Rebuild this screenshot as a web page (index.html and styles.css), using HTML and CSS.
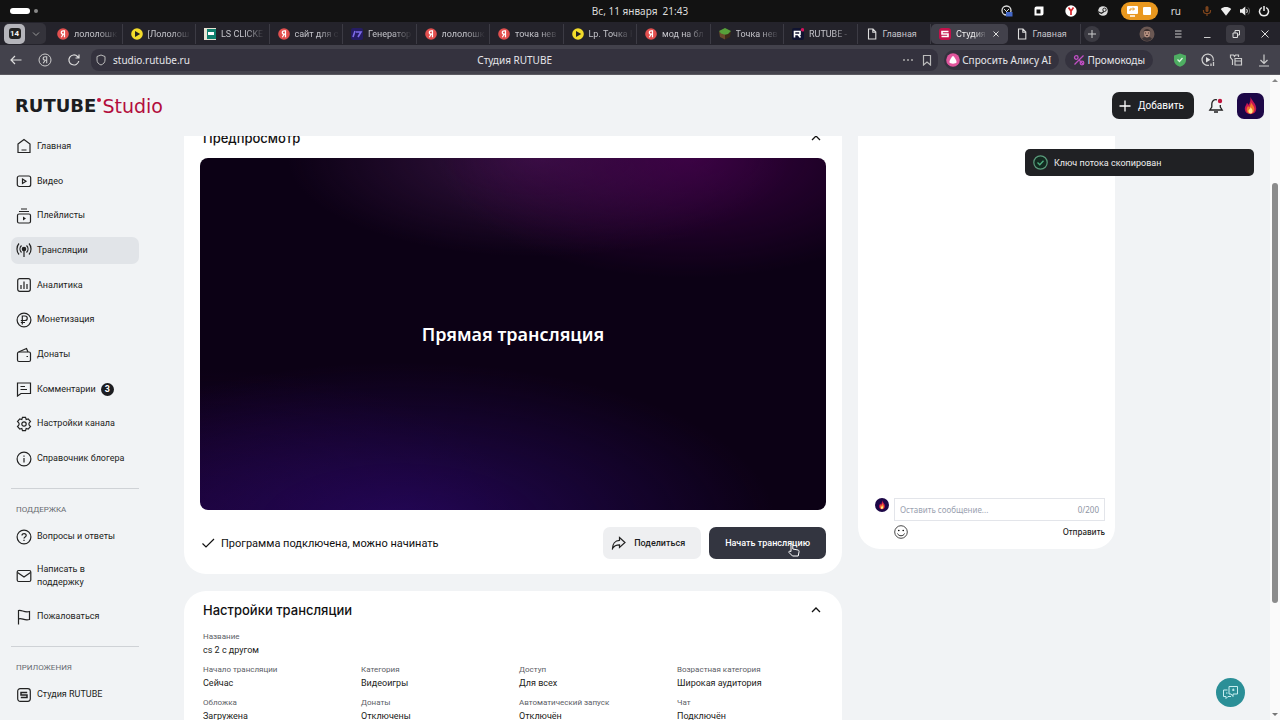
FILE: index.html
```html
<!DOCTYPE html>
<html lang="ru">
<head>
<meta charset="utf-8">
<title>Студия RUTUBE</title>
<link rel="stylesheet" href="styles.css">
</head>
<body>
<svg class="defs" aria-hidden="true">
  <defs>
    <symbol id="ya" viewBox="0 0 12 12"><circle cx="6" cy="6" r="5.8" fill="#e2504f"/><path d="M7.5 9.2V2.8H6.3C5 2.8 4.3 3.500 4.300 4.500C4.300 5.400 5 6.200 6.300 6.200H7.500M6.200 6.200L4.300 9.200" fill="none" stroke="#fff" stroke-width="1.2"/></symbol>
    <symbol id="play-y" viewBox="0 0 12 12"><circle cx="6" cy="6" r="5.800" fill="#f3dc2b"/><path d="M4 3L9.200 6L4 9Z" fill="#222"/></symbol>
    <symbol id="file" viewBox="0 0 12 12"><path d="M2.500 1H7L9.800 4V11H2.500ZM6.800 1V4.200H9.800" fill="none" stroke="#ddd" stroke-width="1.100"/></symbol>
    <symbol id="flame" viewBox="0 0 26 26"><rect width="26" height="26" fill="#1c0747"/><path d="M13 4C14 8 18.500 10 18.500 15.500C18.500 19 16 21 13 21C10 21 7.500 19 7.500 15.500C7.500 13 9 12 9.500 10C10.500 10.500 11 11 11.200 12C12.500 10 13.300 7 13 4Z" fill="#c81652"/><path d="M13.300 9C14 11.500 16.800 13 16.800 16C16.800 18.800 15 20.500 13 20.500C11 20.500 9.300 18.800 9.300 16.500C9.300 15 10.300 14 10.500 13C11.300 13.300 11.600 14 11.700 14.500C12.800 13 13.500 11 13.300 9Z" fill="#f4762c"/><path d="M13.200 14C13.600 15.300 15 16.200 15 17.800C15 19.300 14 20.300 13 20.300S11 19.300 11 17.900C11 16.500 13 15.800 13.200 14Z" fill="#ffe98c"/></symbol>
    <symbol id="chevron" viewBox="0 0 12 12"><path d="M2 8L6 4L10 8" fill="none" stroke="#111" stroke-width="1.300"/></symbol>
  </defs>
</svg>

<div class="sysbar">
  <div class="workspaces"><span class="ws-current"></span><span class="ws-dot"></span></div>
  <time class="clock">Вс, 11 января&nbsp; 21:43</time>
  <div class="tray">
    <svg class="tray-icon" viewBox="0 0 12 12"><circle cx="5.500" cy="5.500" r="4.500" fill="none" stroke="#ddd" stroke-width="1.300"/><path d="M3 4L5.500 6.500L8 4M5.500 6V9" stroke="#ddd" fill="none"/><rect x="5" y="7" width="6.500" height="4.500" fill="#4468c8"/></svg>
    <svg class="tray-icon" viewBox="0 0 12 12"><path d="M3.500 1.500H10.500V8.500A2 2 0 0 1 8.500 10.500H1.500V3.500A2 2 0 0 1 3.500 1.500Z" fill="#fff"/><rect x="3.500" y="4.500" width="4" height="4" fill="#121212"/></svg>
    <svg class="tray-icon" viewBox="0 0 12 12"><circle cx="6" cy="6" r="5.700" fill="#fff"/><path d="M3.500 2.500L6 6L8.500 2.500M6 5.500V10" fill="none" stroke="#d8262c" stroke-width="1.700"/></svg>
    <svg class="tray-icon" viewBox="0 0 12 12"><circle cx="6" cy="6" r="4.800" fill="#ddd"/><circle cx="7.500" cy="4.800" r="1.700" fill="#ddd" stroke="#222"/><path d="M0 6.300L4.500 8.300L7 6.500" fill="none" stroke="#222" stroke-width="1.300"/></svg>
    <span class="cast">
      <svg width="37" height="18" viewBox="0 0 37 18"><rect x="6" y="4" width="11" height="8" rx="1" fill="#fff"/><path d="M9 14H14" stroke="#fff" stroke-width="1.500"/><path d="M9 9V7H13M12 5.500L13.500 7L12 8.500" fill="none" stroke="#e9981f"/><rect x="22" y="5" width="8" height="8" rx="1" fill="#fff"/></svg>
    </span>
    <span class="layout">ru</span>
    <svg class="tray-icon mic" viewBox="0 0 12 12"><rect x="4.500" y="1" width="3" height="6" rx="1.500" fill="#7b431c"/><path d="M2.500 5V6C2.500 9.500 9.500 9.500 9.500 6V5M6 9V11" fill="none" stroke="#7b431c" stroke-width="1.200"/></svg>
    <svg class="tray-icon" viewBox="0 0 12 12"><path d="M.8 4C4 1.400 8 1.400 11.200 4L6 10.800Z" fill="#eee"/></svg>
    <svg class="tray-icon" viewBox="0 0 12 12"><path d="M1 4.300H3L6.300 1.500V10.500L3 7.700H1Z" fill="#eee"/><path d="M7.500 4C8.500 5 8.500 7 7.500 8" fill="none" stroke="#eee"/><path d="M9 2.500C11 4.500 11 7.500 9 9.500" fill="none" stroke="#777"/></svg>
    <svg class="tray-icon" viewBox="0 0 12 12"><path d="M3.800 2.500C-.5 5.500 1.800 10.800 6 10.800S12.500 5.500 8.200 2.500M6 1V6" fill="none" stroke="#eee" stroke-width="1.500"/></svg>
  </div>
</div>

<div class="tabbar">
  <div class="tab-group">
    <button class="tab-count" aria-label="14 вкладок"><span>14</span></button>
    <svg width="8" height="8" viewBox="0 0 8 8"><path d="M1 2.500L4 5.500L7 2.500" fill="none" stroke="#999" /></svg>
  </div>
  <div class="tabs">
    <button class="tab"><svg><use href="#ya"/></svg><span>лололошк</span></button>
    <button class="tab"><svg><use href="#play-y"/></svg><span>[Лололош</span></button>
    <button class="tab"><svg viewBox="0 0 12 12"><rect width="12" height="12" fill="#e8e4d4"/><rect x="3" y="1" width="9" height="10" fill="#0f7f6d"/><rect x="4" y="4" width="6" height="3" fill="#fff"/></svg><span>LS CLICKE</span></button>
    <button class="tab"><svg><use href="#ya"/></svg><span>сайт для с</span></button>
    <button class="tab"><svg viewBox="0 0 12 12"><rect width="12" height="12" rx="2" fill="#251c63"/><path d="M2 9L4 3M5 4H10L7 9" fill="none" stroke="#7d6be8" stroke-width="1.600"/></svg><span>Генератор</span></button>
    <button class="tab"><svg><use href="#ya"/></svg><span>лололошк</span></button>
    <button class="tab"><svg><use href="#ya"/></svg><span>точка нев</span></button>
    <button class="tab"><svg><use href="#play-y"/></svg><span>Lp. Точка Н</span></button>
    <button class="tab"><svg><use href="#ya"/></svg><span>мод на бл</span></button>
    <button class="tab"><svg viewBox="0 0 12 12"><path d="M0 3.500L6 6.500V11.500L1 9Z" fill="#6b4a2c"/><path d="M12 3.500L6 6.500V11.500L11 9Z" fill="#3e2a1a"/><path d="M0 3L6 0L12 3L9 6L6 6.800L2 5.500Z" fill="#57a03a"/></svg><span>Точка нев</span></button>
    <button class="tab"><svg viewBox="0 0 12 12"><rect width="12" height="12" rx="2" fill="#101330"/><circle cx="10.500" cy="1.800" r="1.800" fill="#d4145a"/><path d="M2.500 9.500V3.500H8V6.500H3M6 6.500L8.500 9.500" fill="none" stroke="#fff" stroke-width="1.600"/></svg><span>RUTUBE -</span></button>
    <button class="tab"><svg><use href="#file"/></svg><span class="full">Главная</span></button>
    <button class="tab active"><svg viewBox="0 0 12 12"><rect width="12" height="12" rx="3" fill="#c4114b"/><path d="M9.500 3.500H3V6H9V8.500H2.500" fill="none" stroke="#fff" stroke-width="1.600"/></svg><span>Студия</span><svg class="tab-close" viewBox="0 0 8 8"><path d="M1.500 1.500L6.500 6.500M6.500 1.500L1.500 6.500" stroke="#ddd"/></svg></button>
    <button class="tab"><svg><use href="#file"/></svg><span class="full">Главная</span></button>
  </div>
  <button class="new-tab" aria-label="Новая вкладка"><svg width="10" height="10" viewBox="0 0 10 10"><path d="M5 1V9M1 5H9" stroke="#ccc"/></svg></button>
  <div class="window-controls">
    <svg class="person" viewBox="0 0 16 16"><circle cx="8" cy="8" r="7.500" fill="#6b5853"/><path d="M3 13C4 10 12 10 13 13A7.500 7.500 0 0 1 3 13Z" fill="#3c3436"/><ellipse cx="8" cy="7.500" rx="3" ry="4" fill="#b08c7c"/><path d="M4.500 6C5 2 11 2 11.500 6L10.500 5H5.500Z" fill="#3b2e2c"/><path d="M6 7H7M9 7H10M7 9.500H9" stroke="#4a3430"/></svg>
    <button aria-label="Меню"><svg viewBox="0 0 12 12"><path d="M3 3H9.500M3 6H9.500M3 9H9.500" stroke="#ccc"/></svg></button>
    <button aria-label="Свернуть"><svg viewBox="0 0 12 12"><path d="M3 9.500H9.500" stroke="#ccc"/></svg></button>
    <button class="restore" aria-label="Восстановить"><svg viewBox="0 0 12 12"><path d="M3 5H7.500V9.500H3ZM5 5V2.500H9.500V7H7.500" fill="none" stroke="#ddd"/></svg></button>
    <button aria-label="Закрыть"><svg viewBox="0 0 12 12"><path d="M2.500 2.500L9.500 9.500M9.500 2.500L2.500 9.500" stroke="#ddd"/></svg></button>
  </div>
</div>

<div class="toolbar">
  <button class="tool" aria-label="Назад"><svg viewBox="0 0 14 14"><path d="M2 7H12.500M6 3L2 7L6 11" fill="none" stroke="#ddd" stroke-width="1.200"/></svg></button>
  <button class="tool" aria-label="Яндекс"><svg viewBox="0 0 14 14"><circle cx="7" cy="7" r="6" fill="none" stroke="#ccc"/><path d="M8.700 10.300V3.700H7.300C5.900 3.700 5.200 4.500 5.200 5.500C5.200 6.500 6 7.200 7.300 7.200H8.700M7.200 7.200L5.200 10.300" fill="none" stroke="#ccc" stroke-width="1.100"/></svg></button>
  <button class="tool" aria-label="Обновить"><svg viewBox="0 0 14 14"><path d="M11.800 8A5 5 0 1 1 10.500 3.500L11.800 4.800M12 1.500V5H8.500" fill="none" stroke="#ddd" stroke-width="1.200"/></svg></button>
  <div class="omnibox">
    <label class="address"><svg width="10" height="12" viewBox="0 0 10 12"><path d="M5 1L9 2.500V6C9 8.500 7.500 10 5 11C2.500 10 1 8.500 1 6V2.500Z" fill="none" stroke="#bbb"/></svg><input type="text" value="studio.rutube.ru" aria-label="Адрес"></label>
    <span class="page-title">Студия RUTUBE</span>
    <div class="omni-actions">
      <svg width="12" height="12" viewBox="0 0 12 12"><g fill="#aaa"><circle cx="2" cy="6" r="1"/><circle cx="6" cy="6" r="1"/><circle cx="10" cy="6" r="1"/></g></svg>
      <svg width="12" height="12" viewBox="0 0 12 12"><path d="M2.500 1.500H9.500V11L6 8L2.500 11Z" fill="none" stroke="#bbb" stroke-width="1.200"/></svg>
    </div>
  </div>
  <button class="chip"><svg width="14" height="14" viewBox="0 0 14 14"><circle cx="7" cy="7" r="6.800" fill="#e0559c"/><path d="M7 3C8 3 11 8 10.500 9.500C10 11 4 11 3.500 9.500C3 8 6 3 7 3Z" fill="#fff"/></svg>Спросить Алису AI</button>
  <button class="chip promo"><svg width="12" height="12" viewBox="0 0 12 12"><path d="M10.500 1.500L1.500 10.500M5.500 5.500L10.500 10.500" stroke="#c04fc4" stroke-width="1.300"/><circle cx="3.300" cy="3.500" r="1.800" fill="none" stroke="#c04fc4" stroke-width="1.300"/><circle cx="9" cy="9" r="1.800" fill="none" stroke="#c04fc4" stroke-width="1.300"/></svg>Промокоды</button>
  <div class="extensions">
    <svg viewBox="0 0 14 14"><path d="M7 .5L13 2.500V7C13 10.500 10.500 12.500 7 13.800C3.500 12.500 1 10.500 1 7V2.500Z" fill="#4eae62"/><path d="M4.500 6.500L6.500 8.500L9.500 5" fill="none" stroke="#dff5e3" stroke-width="1.300"/></svg>
    <svg viewBox="0 0 14 14"><path d="M8 12.300A5.700 5.700 0 1 1 12.300 8" fill="none" stroke="#ccc" stroke-width="1.200"/><path d="M5 4L9.500 6.700L5 9.400Z" fill="#ddd"/><path d="M10 13V10.500M12.500 13V9" stroke="#ccc" stroke-width="1.300"/></svg>
    <svg viewBox="0 0 14 14"><path d="M6 5.500H12.500V12H6ZM6 8H12.500M4 11.500H3.500V7L1.500 4.500V2H4.500L5.500 3.500L6.500 2H9.500V4" fill="none" stroke="#ccc" stroke-width="1.200"/></svg>
    <svg viewBox="0 0 14 14"><path d="M7 1.500V10M3.500 7L7 10.500L10.500 7M2 13H12" fill="none" stroke="#ccc" stroke-width="1.200"/></svg>
  </div>
</div>

<div class="viewport">
  <div class="page">
    <header class="page-header">
      <a class="logo" href="#"><span class="logo-main">RUTUBE</span><i class="logo-dot"></i><span class="logo-sub">Studio</span></a>
      <div class="header-actions">
        <button class="add"><svg width="12" height="12" viewBox="0 0 12 12"><path d="M6 .5V11.500M.5 6H11.500" stroke="#fff" stroke-width="1.300"/></svg>Добавить</button>
        <button class="bell" aria-label="Уведомления"><svg width="16" height="16" viewBox="0 0 16 16"><path d="M9 1.800C5.500 1 3.800 3.500 3.800 6V9L1.800 12H14.200L12.300 9V7M6 14H10" fill="none" stroke="#222" stroke-width="1.300"/><circle cx="12" cy="3" r="2.200" fill="#c0143c"/></svg></button>
        <button class="profile" aria-label="Профиль"><svg width="27" height="26" viewBox="0 0 26 26" preserveAspectRatio="xMidYMid slice"><use href="#flame"/></svg></button>
      </div>
    </header>
    <div class="layout-row">
      <nav class="sidebar">
        <div class="nav-main">
          <a href="#" class="nav-item"><svg viewBox="0 0 16 16"><path d="M2 6L8 1.500L14 6V14.500H2ZM5.500 12H10.500"/></svg>Главная</a>
          <a href="#" class="nav-item"><svg viewBox="0 0 16 16"><rect x="1.300" y="3" width="13.400" height="10.500" rx="2"/><path d="M6.500 6L10 8.200L6.500 10.500Z"/></svg>Видео</a>
          <a href="#" class="nav-item"><svg viewBox="0 0 16 16"><rect x="1.500" y="6" width="13" height="9" rx="1.500"/><path d="M3 3.500H13M5 1H11"/><path d="M7 8.500L10 10.500L7 12.500Z" fill="#222" stroke="none"/></svg>Плейлисты</a>
          <a href="#" class="nav-item current"><svg viewBox="0 0 16 16"><circle cx="8" cy="7" r="1.700" fill="#222"/><path d="M8 8V15M5.500 10.500C3.500 8.500 3.500 5.500 5.500 3.500M10.500 10.500C12.500 8.500 12.500 5.500 10.500 3.500M3 12.500C.3 9.500.3 4.500 3 1.500M13 12.500C15.700 9.500 15.700 4.500 13 1.500"/></svg>Трансляции</a>
          <a href="#" class="nav-item"><svg viewBox="0 0 16 16"><rect x="1.700" y="1.700" width="12.600" height="12.600" rx="2"/><path d="M5 8V12M8 4.500V12M11 7V12"/></svg>Аналитика</a>
          <a href="#" class="nav-item"><svg viewBox="0 0 16 16"><circle cx="8" cy="8" r="6.900"/><path d="M6.300 12.500V4H9C12 4 12 8.500 9 8.500H4.800M4.800 10.500H9"/></svg>Монетизация</a>
          <a href="#" class="nav-item"><svg viewBox="0 0 16 16"><rect x="1.500" y="5" width="13" height="9.500" rx="1.500"/><path d="M2.500 5L10.500 1.500L12 5M10.500 9.500H12"/></svg>Донаты</a>
          <a href="#" class="nav-item"><svg viewBox="0 0 16 16"><path d="M1.500 2H14.500V12.500H5L1.500 15ZM4.500 5.500H9M4.500 8.500H11"/></svg>Комментарии<b class="count">3</b></a>
          <a href="#" class="nav-item"><svg viewBox="0 0 16 16"><path d="M6.500 1.300H9.500L10.200 3.500L12.200 2.900L14.500 5.500L13 7.200V8.800L14.500 10.500L12.200 13.100L10.200 12.500L9.500 14.700H6.500L5.800 12.500L3.800 13.100L1.500 10.500L3 8.800V7.200L1.500 5.500L3.800 2.900L5.800 3.500Z"/><circle cx="8" cy="8" r="2.200"/></svg>Настройки канала</a>
          <a href="#" class="nav-item"><svg viewBox="0 0 16 16"><circle cx="8" cy="8" r="6.900"/><path d="M8 7V11.500M8 4.500V5.800"/></svg>Справочник блогера</a>
        </div>
        <div class="nav-section">
          <h2>ПОДДЕРЖКА</h2>
          <a href="#" class="nav-item"><svg viewBox="0 0 16 16"><circle cx="8" cy="8" r="6.900"/><path d="M6 6.500C6 3.800 10.200 4 10.200 6.500C10.200 8 8 8 8 9.500M8 10.800V12"/></svg>Вопросы и ответы</a>
          <a href="#" class="nav-item tall"><svg viewBox="0 0 16 16"><rect x="1.200" y="2.500" width="13.600" height="11" rx="1.500"/><path d="M1.500 4.500L8 9L14.500 4.500"/></svg>Написать в поддержку</a>
          <a href="#" class="nav-item"><svg viewBox="0 0 16 16"><path d="M2.500 15.500V1.500C6 .5 8 4 13.500 2.500V10.500C8 12 6 8.500 2.500 10"/></svg>Пожаловаться</a>
        </div>
        <div class="nav-section">
          <h2>ПРИЛОЖЕНИЯ</h2>
          <a href="#" class="nav-item"><svg viewBox="0 0 16 16"><rect x="1.700" y="1.700" width="12.600" height="12.600" rx="2.500"/><path d="M11.200 5.500H5V8H11V10.500H4.800" stroke-width="1.500"/></svg>Студия RUTUBE</a>
        </div>
      </nav>
      <main class="content">
        <div class="column">
          <section class="card preview">
            <div class="card-head"><h1>Предпросмотр</h1><button aria-label="Свернуть"><svg width="12" height="12"><use href="#chevron"/></svg></button></div>
            <div class="video">Прямая трансляция</div>
            <div class="actions">
              <svg width="14" height="14" viewBox="0 0 14 14"><path d="M1.500 7.500L5 11L13 3" fill="none" stroke="#111" stroke-width="1.200"/></svg>
              <p>Программа подключена, можно начинать</p>
              <button class="share"><svg width="15" height="14" viewBox="0 0 15 14"><path d="M8.500 1.500L14 6.500L8.500 11.500V8.800C5 8.800 3 9.800 1.500 12.500C1.500 8 4 4.500 8.500 4.300Z" fill="none" stroke="#222" stroke-width="1.200"/></svg>Поделиться</button>
              <button class="start">Начать трансляцию
                <svg class="pointer" width="12" height="14" viewBox="0 0 12 14"><path d="M3 8.500V2C3 .7 4.800.7 4.800 2V6L10 7C11 7.300 11.200 8 11 9L10.200 13H4.500L1 9.500C.5 8.500 1.500 7.500 3 8.500Z" fill="#333540" stroke="#fff"/></svg>
              </button>
            </div>
          </section>
          <section class="card settings">
            <div class="card-head"><h1>Настройки трансляции</h1><button aria-label="Свернуть"><svg width="12" height="12"><use href="#chevron"/></svg></button></div>
            <dl class="fields">
              <div class="wide"><dt>Название</dt><dd>cs 2 с другом</dd></div>
              <div><dt>Начало трансляции</dt><dd>Сейчас</dd></div>
              <div><dt>Категория</dt><dd>Видеоигры</dd></div>
              <div><dt>Доступ</dt><dd>Для всех</dd></div>
              <div><dt>Возрастная категория</dt><dd>Широкая аудитория</dd></div>
              <div><dt>Обложка</dt><dd>Загружена</dd></div>
              <div><dt>Донаты</dt><dd>Отключены</dd></div>
              <div><dt>Автоматический запуск</dt><dd>Отключён</dd></div>
              <div><dt>Чат</dt><dd>Подключён</dd></div>
            </dl>
          </section>
        </div>
        <aside class="card chat">
          <svg class="chat-avatar" viewBox="0 0 26 26"><use href="#flame"/></svg>
          <form class="composer">
            <label class="message"><input type="text" placeholder="Оставить сообщение..." aria-label="Сообщение"><span>0/200</span></label>
            <div class="composer-row">
              <button type="button" aria-label="Эмодзи"><svg width="14" height="14" viewBox="0 0 14 14"><circle cx="7" cy="7" r="6.300" fill="none" stroke="#333" stroke-width=".9"/><path d="M3.500 8.500C4.500 11.500 9.500 11.500 10.500 8.500" fill="none" stroke="#333"/><circle cx="4.800" cy="5.500" r=".8"/><circle cx="9.200" cy="5.500" r=".8"/></svg></button>
              <button type="submit" class="send">Отправить</button>
            </div>
          </form>
        </aside>
      </main>
    </div>
    <div class="toast" role="status"><svg width="15" height="15" viewBox="0 0 15 15"><circle cx="7.500" cy="7.500" r="6.700" fill="#122a20" stroke="#5a9c7c" stroke-width="1.200"/><path d="M4.500 7.500L6.800 9.800L10.500 5.800" fill="none" stroke="#4fae80" stroke-width="1.300"/></svg>Ключ потока скопирован</div>
    <button class="help" aria-label="Помощь"><svg width="17" height="15" viewBox="0 0 17 15"><path d="M7 1.500H15.500V9H11V11.500L9 9H7ZM5.500 5H1.500V11.500H4V13.500L6 11.500H9M11.300 3.500V6M10 5H12.500M4 8H5.500" fill="none" stroke="#c9eef0"/></svg></button>
  </div>
  <div class="scrollbar"><i class="arrow up"></i><i class="thumb"></i><i class="arrow down"></i></div>
</div>
</body>
</html>
```
FILE: styles.css
```css
* { box-sizing: border-box; }
body {
  margin: 0;
  height: 100vh;
  display: flex;
  flex-direction: column;
  overflow: hidden;
  font-family: Roboto, "Noto Sans", sans-serif;
  font-size: 9px;
  color: #1c1d21;
}
button {
  margin: 0;
  padding: 0;
  border: 0;
  background: none;
  font: inherit;
  color: inherit;
}
input {
  min-width: 0;
  padding: 0;
  border: 0;
  outline: 0;
  background: none;
  font: inherit;
  color: inherit;
}
a { color: inherit; text-decoration: none; }
svg { display: block; flex: none; }
.defs { position: absolute; width: 0; height: 0; }

/* System bar */
.sysbar {
  flex: none;
  height: 22px;
  padding: 0 10px;
  display: grid;
  grid-template-columns: 1fr auto 1fr;
  align-items: center;
  background: #121212;
  color: #ddd;
  font-family: "Noto Sans", sans-serif;
  font-size: 10px;
}
.workspaces { display: flex; align-items: center; gap: 4px; }
.ws-current { width: 20px; height: 6px; border-radius: 3px; background: #fff; }
.ws-dot { width: 4px; height: 4px; border-radius: 2px; background: #888; }
.tray { display: flex; align-items: center; justify-content: flex-end; gap: 7px; }
.tray-icon { width: 12px; height: 12px; }
.tray-icon:nth-child(-n+3) { margin-right: 13px; }
.cast { margin-left: 5px; border-radius: 9px; background: #e9981f; }
.layout { margin: 0 13px 0 6px; }

/* Tabs */
.tabbar {
  flex: none;
  height: 23px;
  display: flex;
  align-items: center;
  background: #24232b;
  color: #c4c4ca;
}
.tab-group {
  width: 42px;
  height: 21px;
  margin-left: 4px;
  border-radius: 5px;
  display: flex;
  align-items: center;
  gap: 7px;
  background: #34333b;
}
.tab-count {
  width: 21px;
  height: 20px;
  border-radius: 5px;
  background: #b4b4ba;
  display: grid;
  place-items: center;
}
.tab-count span {
  width: 12px;
  border-radius: 3px;
  background: #222;
  color: #fff;
  font-size: 8px;
  line-height: 11px;
  font-weight: 600;
}
.tabs { flex: 1; min-width: 0; display: flex; margin-left: 3px; }
.tab {
  flex: 1 1 0;
  min-width: 0;
  height: 20px;
  padding: 0 4px 0 8px;
  display: flex;
  align-items: center;
  gap: 5px;
  border-right: 1px solid #3c3b44;
  white-space: nowrap;
}
.tab svg { width: 12px; height: 12px; }
.tab span {
  flex: 1;
  min-width: 0;
  text-align: left;
  -webkit-mask-image: linear-gradient(90deg, #000 55%, rgba(0, 0, 0, .1) 95%);
  mask-image: linear-gradient(90deg, #000 55%, rgba(0, 0, 0, .1) 95%);
}
.tab .full { -webkit-mask-image: none; mask-image: none; }
.tab.active { background: #42414b; border-color: transparent; border-radius: 5px; color: #eee; padding-right: 7px; }
.tab .tab-close { width: 8px; height: 8px; }
.new-tab {
  width: 16px;
  height: 16px;
  margin-left: 3px;
  border-radius: 8px;
  background: #3b3a42;
  display: grid;
  place-items: center;
}
.window-controls { display: flex; align-items: center; gap: 10px; margin: 0 6px 0 39px; }
.window-controls button { width: 19px; height: 18px; display: grid; place-items: center; border-radius: 4px; }
.window-controls svg { width: 12px; height: 12px; }
.window-controls .person { width: 16px; height: 16px; margin-right: 3px; }
.window-controls .restore { background: #3b3a42; }

/* Address bar */
.toolbar {
  flex: none;
  height: 30px;
  padding: 0 9px;
  display: flex;
  align-items: center;
  background: #43424c;
  border-bottom: 1px solid #5a5960;
  color: #e6e6ea;
  font-family: "Noto Sans", sans-serif;
  font-size: 10px;
}
.tool { width: 14px; height: 14px; margin-right: 15px; }
.omnibox {
  flex: 1;
  min-width: 0;
  height: 22px;
  margin-left: -5px;
  padding: 0 5px;
  display: grid;
  grid-template-columns: 1fr auto 1fr;
  align-items: center;
  border-radius: 8px;
  background: #34323e;
}
.address { display: flex; align-items: center; gap: 7px; }
.omni-actions { display: flex; justify-content: flex-end; gap: 7px; }
.chip {
  height: 20px;
  margin-left: 6px;
  padding: 0 8px 0 2px;
  display: flex;
  align-items: center;
  gap: 2px;
  border-radius: 10px;
  background: #34323e;
}
.promo { padding: 0 8px; gap: 2px; }
.extensions { display: flex; gap: 14px; margin-left: 20px; }
.extensions svg { width: 14px; height: 14px; }

/* Page */
.viewport { flex: 1; min-height: 0; display: flex; }
.page {
  flex: 1;
  min-width: 0;
  position: relative;
  display: flex;
  flex-direction: column;
  background: #f1f3f5;
}
.page-header {
  flex: none;
  height: 61px;
  padding: 0 6px 0 15px;
  display: flex;
  align-items: center;
  justify-content: space-between;
}
.logo { display: flex; align-items: center; font-family: "DejaVu Sans", sans-serif; line-height: 18px; }
.logo-main { font-size: 18px; font-weight: 700; color: #1c1d21; }
.logo-dot { width: 4px; height: 4px; border-radius: 2px; margin: 0 1px 12px; background: #c0143c; }
.logo-sub { font-size: 19px; color: #b30d3c; }
.header-actions { display: flex; align-items: center; }
.add {
  height: 27px;
  padding: 0 10px 0 7px;
  display: flex;
  align-items: center;
  gap: 7px;
  border-radius: 7px;
  background: #202124;
  color: #fff;
  font-size: 10px;
}
.bell { margin: 0 13px 0 14px; }
.profile { border-radius: 7px; overflow: hidden; }

.layout-row { flex: 1; min-height: 0; display: flex; overflow: hidden; }
.sidebar { flex: none; width: 128px; margin: -7px 45px 0 11px; }
.nav-main { height: 347px; display: grid; grid-template-rows: repeat(10, 1fr); align-items: center; }
.nav-item {
  height: 27px;
  padding: 0 5px;
  display: flex;
  align-items: center;
  gap: 5px;
  border-radius: 7px;
  line-height: 13px;
}
.nav-item svg { width: 16px; height: 16px; fill: none; stroke: #222; stroke-width: 1.2; }
.nav-item.current { background: #e1e4e8; }
.nav-item.tall { height: 40px; margin: 6px 0 7px; padding-right: 40px; }
.count {
  width: 13px;
  border-radius: 7px;
  background: #1c1d21;
  color: #fff;
  text-align: center;
}
.nav-section { margin-top: 12px; padding: 14px 0 4px; border-top: 1px solid #cfd2d6; }
.nav-section h2 { margin: 0 0 6px; padding-left: 5px; font-size: 8px; font-weight: 400; line-height: 14px; color: #666a70; }

.content { flex: 1; min-width: 0; max-width: 931px; display: flex; align-items: flex-start; gap: 16px; margin-top: -24px; }
.column { flex: 1; min-width: 0; display: flex; flex-direction: column; gap: 17px; }
.card { border-radius: 22px; background: #fff; }
.preview { padding: 17px 16px 15px; }
.card-head { display: flex; align-items: center; justify-content: space-between; padding: 0 4px 0 3px; }
.card-head h1 { margin: 0; font-family: Inter, sans-serif; font-size: 13px; font-weight: 500; line-height: 18px; color: #111; }
.video {
  margin-top: 11px;
  aspect-ratio: 16 / 9;
  border-radius: 8px;
  display: grid;
  place-items: center;
  background:
    radial-gradient(ellipse 40% 34% at 78% 0, rgba(72, 0, 80, .7), transparent),
    radial-gradient(ellipse 40% 28% at 54% 0, rgba(62, 22, 74, .8), transparent),
    radial-gradient(ellipse 60% 46% at 32% 104%, rgba(40, 8, 100, .8), transparent),
    radial-gradient(ellipse 50% 40% at 0 100%, rgba(36, 0, 70, .5), transparent),
    #0c0115;
  color: #fff;
  font-family: "Noto Sans", sans-serif;
  font-size: 18px;
  font-weight: 600;
}
.actions { display: flex; align-items: center; margin-top: 17px; padding-left: 1px; }
.actions p { flex: 1; margin: 0 0 0 6px; font-size: 11px; color: #111; }
.actions button { height: 32px; border-radius: 7px; font-weight: 500; }
.share { padding: 0 16px 0 8px; display: flex; align-items: center; gap: 8px; background: #eeeff1; }
.start { position: relative; margin-left: 8px; padding: 0 16px; background: #333540; color: #fff; }
.pointer { position: absolute; left: 79px; top: 16px; }

.settings { padding: 10px 16px 20px; }
.fields {
  margin: 11px 0 0;
  padding-left: 3px;
  display: grid;
  grid-template-columns: repeat(4, 158px);
  row-gap: 6px;
}
.fields .wide { grid-column: 1 / -1; }
.fields dt { font-size: 8px; line-height: 13px; color: #5c6066; }
.fields dd { margin: 0; line-height: 14px; }

.chat { width: 257px; height: 437px; padding: 0 10px 10px 17px; display: flex; align-items: flex-end; gap: 5px; }
.chat-avatar { width: 14px; height: 14px; border-radius: 7px; margin-bottom: 27px; }
.composer { flex: 1; min-width: 0; font-family: "Noto Sans", sans-serif; }
.message {
  height: 23px;
  padding: 0 5px;
  display: flex;
  align-items: center;
  border: 1px solid #e3e5ea;
  color: #8d94a3;
  font-size: 8px;
}
.message input { flex: 1; }
.message input::placeholder { color: #9aa1b0; }
.composer-row { display: flex; justify-content: space-between; align-items: center; margin-top: 4px; }
.send { font-size: 8px; font-weight: 500; line-height: 12px; }

.toast {
  position: absolute;
  top: 74px;
  right: 16px;
  width: 229px;
  height: 27px;
  padding: 0 8px;
  display: flex;
  align-items: center;
  gap: 6px;
  border-radius: 5px;
  background: #202124;
  color: #eee;
}
.help {
  position: absolute;
  right: 25px;
  bottom: 13px;
  width: 29px;
  height: 29px;
  border-radius: 50%;
  background: #2b8f97;
  display: grid;
  place-items: center;
}
.scrollbar {
  flex: none;
  width: 10px;
  padding: 4px 2px;
  display: flex;
  flex-direction: column;
  align-items: center;
  background: #fafafa;
}
.arrow { border: 3px solid transparent; }
.up { border-top-width: 0; border-bottom-color: #888; }
.down { border-bottom-width: 0; border-top-color: #777; margin-top: auto; }
.thumb { width: 6px; height: 66%; margin-top: 101px; border-radius: 3px; background: #8b8b8b; }
```
